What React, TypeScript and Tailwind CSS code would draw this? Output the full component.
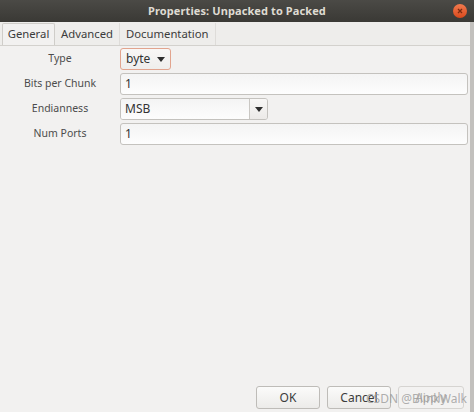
const font = { fontFamily: '"Noto Sans", "Open Sans", sans-serif' };

const Caret = () => (
  <svg width="8" height="5" viewBox="0 0 8 5">
    <path d="M0 0 L8 0 L4 5 Z" fill="#2e2e2e" />
  </svg>
);

const Row = ({ label, children }: { label: string; children: React.ReactNode }) => (
  <div className="flex items-center h-[22px]">
    <div className="w-[120px] shrink-0 text-center text-[10.5px] text-[#4c4c4c]">{label}</div>
    {children}
  </div>
);

const TextInput = ({ value }: { value: string }) => (
  <div className="flex-1 h-[22px] mr-[2px] flex items-center pl-[4px] rounded-[3px] border border-[#c4c2be] bg-gradient-to-b from-[#f4f4f4] to-[#fdfdfd] text-[12px] text-[#333]">
    {value}
  </div>
);

const DialogButton = ({ label, disabled = false }: { label: string; disabled?: boolean }) => (
  <div
    className={
      disabled
        ? 'w-[66px] h-[23px] flex items-center justify-center rounded-[3px] border border-[#d6d4d1] bg-[#f3f2f1] text-[12px] text-[#b0aeab]'
        : 'w-[64px] h-[23px] flex items-center justify-center rounded-[3px] border border-[#bebcb8] bg-gradient-to-b from-[#fbfbfa] to-[#ecebe9] text-[12px] text-[#3c3c3c]'
    }
  >
    {label}
  </div>
);

const App = () => {
  return (
    <div style={font} className="relative w-[474px] h-[412px] flex flex-col bg-[#f2f1f0] overflow-hidden">
      {/* title bar */}
      <div className="h-[22px] shrink-0 flex items-center justify-center bg-gradient-to-b from-[#4b4a46] to-[#3a3935] relative">
        <span className="text-[11px] font-bold text-[#dfdbd2] tracking-[0.1px]">Properties: Unpacked to Packed</span>
        <div className="absolute right-[7px] top-[4px] w-[14px] h-[14px] rounded-full bg-gradient-to-b from-[#f27a4d] to-[#d9481a] flex items-center justify-center">
          <svg width="6" height="6" viewBox="0 0 6 6">
            <path d="M1 1 L5 5 M5 1 L1 5" stroke="#7a2a10" strokeWidth="1.3" />
          </svg>
        </div>
      </div>

      <div className="flex-1 flex flex-col border-r-[4px] border-[#c2c0bd]">
        {/* tabs */}
        <div className="h-[24px] shrink-0 flex items-end pl-[2px] border-b border-[#d3d1cd] bg-[#eeedeb]">
          <div className="h-[22px] w-[53px] flex items-center justify-center border border-b-0 border-[#cfcdc9] rounded-t-[2px] bg-[#f2f1f0] text-[11.3px] text-[#3c3c3c]">
            General
          </div>
          <div className="h-[22px] px-[6px] flex items-center text-[11.3px] text-[#3c3c3c] border-r border-[#dedcd9]">Advanced</div>
          <div className="h-[22px] px-[6px] flex items-center text-[11.3px] text-[#3c3c3c] border-r border-[#dedcd9]">Documentation</div>
        </div>

        {/* form */}
        <div className="flex flex-col gap-[3px] pt-[2px]">
          <Row label="Type">
            <div className="h-[22px] w-[51px] flex items-center gap-[7px] pl-[5px] rounded-[3px] border border-[#e2a48e] bg-gradient-to-b from-[#f8f7f6] to-[#efeeec] text-[12px] text-[#333]">
              byte
              <Caret />
            </div>
          </Row>
          <Row label="Bits per Chunk">
            <TextInput value="1" />
          </Row>
          <Row label="Endianness">
            <div className="w-[148px] h-[22px] flex rounded-[3px] border border-[#c4c2be] overflow-hidden">
              <div className="flex-1 flex items-center pl-[4px] bg-gradient-to-b from-[#f4f4f4] to-[#fdfdfd] text-[12px] text-[#333]">MSB</div>
              <div className="w-[18px] flex items-center justify-center border-l border-[#c9c7c3] bg-gradient-to-b from-[#f8f7f6] to-[#eceae8]">
                <Caret />
              </div>
            </div>
          </Row>
          <Row label="Num Ports">
            <TextInput value="1" />
          </Row>
        </div>

        <div className="flex-1" />

        {/* buttons */}
        <div className="flex justify-end gap-[7px] pr-[6px] pb-[3px]">
          <DialogButton label="OK" />
          <DialogButton label="Cancel" />
          <DialogButton label="Apply" disabled />
        </div>
      </div>

      <span className="absolute left-[366px] top-[390px] text-[12px] text-[#9a9a9a]/80">CSDN @BlinkWalk</span>
    </div>
  );
};

export default App;
